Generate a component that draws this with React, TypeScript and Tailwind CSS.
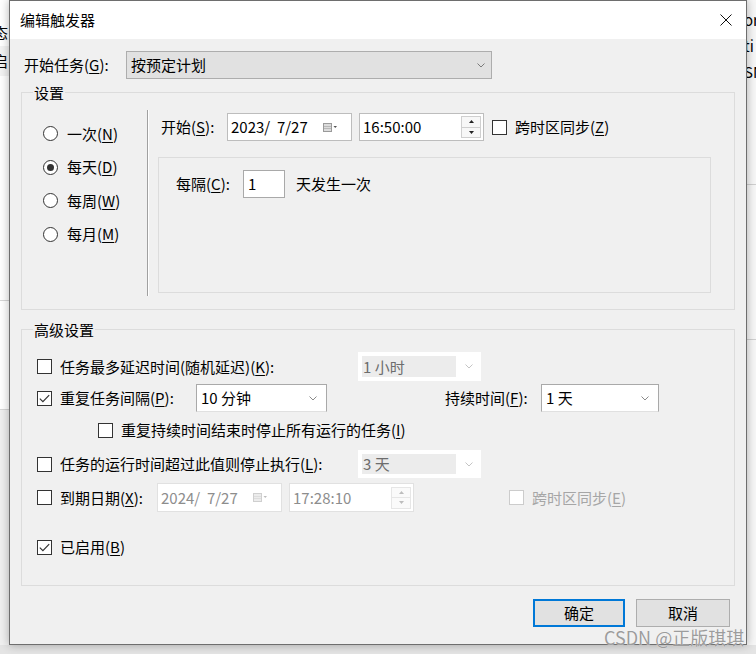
import React from "react";

const Mn = ({ k }: { k: string }) => (
  <>
    (<span className="underline decoration-1 underline-offset-[2px]">{k}</span>)
  </>
);

const Chevron = ({ color = "#606060" }: { color?: string }) => (
  <svg width="8" height="5" viewBox="0 0 8 5">
    <path d="M0.5 0.5L4 4L7.5 0.5" stroke={color} fill="none" strokeWidth="1" />
  </svg>
);

const CheckBox = ({ checked = false, disabled = false }: { checked?: boolean; disabled?: boolean }) => (
  <span
    className={`flex h-[15px] w-[15px] shrink-0 items-center justify-center border bg-white ${
      disabled ? "border-[#cccccc]" : "border-[#333333]"
    }`}
  >
    {checked && (
      <svg width="11" height="9" viewBox="0 0 11 9">
        <path d="M0.8 4.6L3.9 7.6L10.2 1.2" fill="none" stroke="#333333" strokeWidth="1.2" />
      </svg>
    )}
  </span>
);

const Radio = ({ checked = false }: { checked?: boolean }) => (
  <span className="flex h-[15px] w-[15px] shrink-0 items-center justify-center rounded-full border border-[#333333] bg-white">
    {checked && <span className="h-[7px] w-[7px] rounded-full bg-[#333333]" />}
  </span>
);

const CalIcon = ({ disabled = false }: { disabled?: boolean }) => (
  <svg width="15" height="9" viewBox="0 0 15 9">
    <rect x="0.5" y="0.5" width="8" height="8" fill={disabled ? "#ececec" : "#dcdcdc"} stroke={disabled ? "#cfcfcf" : "#9a9a9a"} />
    <path d="M1 3.5H8M1 5.5H8" stroke={disabled ? "#dddddd" : "#b8b8b8"} />
    <path d="M10.5 3L14 3L12.25 5Z" fill={disabled ? "#bdbdbd" : "#555555"} />
  </svg>
);

const DateBox = ({ value, disabled = false }: { value: string; disabled?: boolean }) => (
  <div
    className={`flex h-full w-[125px] items-center border bg-white pl-[3px] pr-[13px] whitespace-pre ${
      disabled ? "border-[#e1e1e1] text-[#8d8d8d]" : "border-[#bdbdbd]"
    }`}
  >
    <span className="flex-1">{value}</span>
    <CalIcon disabled={disabled} />
  </div>
);

const Spin = ({ disabled = false }: { disabled?: boolean }) => {
  const b = disabled ? "border-[#e6e6e6] bg-[#fafafa]" : "border-[#cfcfcf] bg-[#f7f7f7]";
  const f = disabled ? "#bdbdbd" : "#222222";
  return (
    <div className="flex h-[22px] w-[20px] flex-col">
      <span className={`flex flex-1 items-center justify-center border ${b}`}>
        <svg width="5" height="3" viewBox="0 0 5 3">
          <path d="M0 3L2.5 0L5 3Z" fill={f} />
        </svg>
      </span>
      <span className={`flex flex-1 items-center justify-center border border-t-0 ${b}`}>
        <svg width="5" height="3" viewBox="0 0 5 3">
          <path d="M0 0L2.5 3L5 0Z" fill={f} />
        </svg>
      </span>
    </div>
  );
};

const TimeBox = ({ value, disabled = false }: { value: string; disabled?: boolean }) => (
  <div
    className={`ml-[7px] flex h-full w-[125px] items-center border bg-white pl-[3px] pr-[2px] ${
      disabled ? "border-[#e1e1e1] text-[#8d8d8d]" : "border-[#bdbdbd]"
    }`}
  >
    <span className="flex-1">{value}</span>
    <Spin disabled={disabled} />
  </div>
);

const Combo = ({ value, w }: { value: string; w: string }) => (
  <div className={`flex h-[28px] ${w} items-center justify-between border border-[#a9a9a9] border-b-[#e0e0e0] bg-white pl-[4px] pr-[9px]`}>
    <span>{value}</span>
    <Chevron color="#8a8a8a" />
  </div>
);

const DisabledCombo = ({ value }: { value: string }) => (
  <div className="flex h-full w-[123px] bg-white py-[4px] pl-[4px]">
    <div className="flex flex-1 items-center bg-[#ececec] pl-[1px] text-[#6d6d6d]">{value}</div>
    <div className="flex w-[25px] items-center justify-center">
      <Chevron color="#c4c4c4" />
    </div>
  </div>
);

export default function App() {
  return (
    <div className="relative flex h-[654px] w-[756px] flex-col overflow-hidden bg-[#ebebeb] font-['Noto_Sans_CJK_SC',sans-serif] text-[15px] leading-[20px] text-black">
      <div className="flex h-[645px]">
        {/* window behind, left edge */}
        <div className="flex w-[9px] flex-col overflow-hidden whitespace-nowrap">
          <div className="h-[46px] bg-white pt-[23px]">
            <span className="-ml-[7px] block">态</span>
          </div>
          <div className="h-[30px] bg-[#f3f3f3] pt-[5px]">
            <span className="-ml-[7px] block">启</span>
          </div>
          <div className="h-[224px] bg-white" />
          <div className="h-[1px] bg-[#d6d6d6]" />
          <div className="h-[108px] bg-white" />
          <div className="h-[1px] bg-[#d6d6d6]" />
          <div className="flex-1 bg-[#f0f0f0]" />
        </div>

        <div className="relative z-10 flex h-[645px] w-[738px] flex-col border border-[#6e6e6e] bg-[#f0f0f0] shadow-[0_0_9px_rgba(0,0,0,0.3)]">
          <div className="flex h-[38px] items-center justify-between bg-white pl-[10px] pr-[14px]">
            <span>编辑触发器</span>
            <svg width="12" height="12" viewBox="0 0 12 12">
              <path d="M0.5 0.5L11.5 11.5M11.5 0.5L0.5 11.5" stroke="#111111" strokeWidth="1" />
            </svg>
          </div>

          <div className="flex flex-1 flex-col">
            <div className="ml-[14px] mt-[12px] flex h-[28px] items-center">
              <span className="w-[102px]">
                开始任务<Mn k="G" />:
              </span>
              <div className="flex h-[28px] w-[366px] items-center justify-between border border-[#adadad] bg-[#e1e1e1] pl-[4px] pr-[6px]">
                <span>按预定计划</span>
                <Chevron color="#7a7a7a" />
              </div>
            </div>

            {/* 设置 */}
            <div className="relative ml-[11px] mt-[13px] h-[218px] w-[714px] border border-[#dcdcdc]">
              <span className="absolute left-[11px] top-[-10px] bg-[#f0f0f0] px-[1px]">设置</span>
              <div className="flex pt-[17px]">
                <div className="flex w-[125px] flex-col pl-[21px] pt-[7px]">
                  {[
                    { t: "一次", k: "N", c: false },
                    { t: "每天", k: "D", c: true },
                    { t: "每周", k: "W", c: false },
                    { t: "每月", k: "M", c: false },
                  ].map((r) => (
                    <div key={r.k} className="flex h-[33.5px] items-center gap-[9px]">
                      <Radio checked={r.c} />
                      <span>
                        {r.t}
                        <Mn k={r.k} />
                      </span>
                    </div>
                  ))}
                </div>
                <div className="h-[186px] w-[2px] border-l border-[#a0a0a0] bg-white" />
                <div className="flex flex-1 flex-col pt-[3px]">
                  <div className="flex h-[28px] items-center pl-[12px]">
                    <span className="w-[66px]">
                      开始<Mn k="S" />:
                    </span>
                    <DateBox value="2023/  7/27" />
                    <TimeBox value="16:50:00" />
                    <span className="ml-[8px]">
                      <CheckBox />
                    </span>
                    <span className="ml-[8px]">
                      跨时区同步<Mn k="Z" />
                    </span>
                  </div>
                  <div className="ml-[9px] mt-[16px] h-[136px] w-[553px] border border-[#dcdcdc]">
                    <div className="ml-[17px] mt-[12px] flex h-[28px] items-center">
                      <span className="w-[67px]">
                        每隔<Mn k="C" />:
                      </span>
                      <div className="flex h-[28px] w-[42px] items-center border border-[#a9a9a9] bg-white pl-[4px]">1</div>
                      <span className="ml-[11px]">天发生一次</span>
                    </div>
                  </div>
                </div>
              </div>
            </div>

            {/* 高级设置 */}
            <div className="relative ml-[11px] mt-[19px] h-[257px] w-[714px] border border-[#dcdcdc]">
              <span className="absolute left-[11px] top-[-10px] bg-[#f0f0f0] px-[1px]">高级设置</span>
              <div className="flex flex-col pl-[15px] pt-[22px]">
                <div className="flex h-[29px] items-center">
                  <div className="flex w-[321px] items-center gap-[8px]">
                    <CheckBox />
                    <span>
                      任务最多延迟时间(随机延迟)<Mn k="K" />:
                    </span>
                  </div>
                  <DisabledCombo value="1 小时" />
                </div>

                <div className="mt-[3px] flex h-[28px] items-center">
                  <div className="flex w-[159px] items-center gap-[8px]">
                    <CheckBox checked />
                    <span>
                      重复任务间隔<Mn k="P" />:
                    </span>
                  </div>
                  <Combo value="10 分钟" w="w-[131px]" />
                  <span className="ml-[118px] w-[96px]">
                    持续时间<Mn k="F" />:
                  </span>
                  <Combo value="1 天" w="w-[118px]" />
                </div>

                <div className="ml-[61px] mt-[8px] flex h-[20px] items-center gap-[8px]">
                  <CheckBox />
                  <span>
                    重复持续时间结束时停止所有运行的任务<Mn k="I" />
                  </span>
                </div>

                <div className="mt-[10px] flex h-[28px] items-center">
                  <div className="flex w-[321px] items-center gap-[8px]">
                    <CheckBox />
                    <span>
                      任务的运行时间超过此值则停止执行<Mn k="L" />:
                    </span>
                  </div>
                  <DisabledCombo value="3 天" />
                </div>

                <div className="mt-[5px] flex h-[29px] items-center">
                  <div className="flex w-[120px] items-center gap-[8px]">
                    <CheckBox />
                    <span>
                      到期日期<Mn k="X" />:
                    </span>
                  </div>
                  <DateBox value="2024/  7/27" disabled />
                  <TimeBox value="17:28:10" disabled />
                  <span className="ml-[95px]">
                    <CheckBox disabled />
                  </span>
                  <span className="ml-[8px] text-[#a6a6a6]">
                    跨时区同步<Mn k="E" />
                  </span>
                </div>

                <div className="mt-[25px] flex h-[20px] items-center gap-[8px]">
                  <CheckBox checked />
                  <span>
                    已启用<Mn k="B" />
                  </span>
                </div>
              </div>
            </div>

            <div className="mt-[13px] flex justify-end gap-[11px] pr-[16px]">
              <button className="flex h-[28px] w-[92px] items-center justify-center border-2 border-[#0078d7] bg-[#e1e1e1]">
                确定
              </button>
              <button className="flex h-[28px] w-[94px] items-center justify-center border border-[#adadad] bg-[#e1e1e1]">
                取消
              </button>
            </div>
          </div>
        </div>

        {/* window behind, right edge */}
        <div className="flex w-[9px] flex-col overflow-hidden whitespace-nowrap bg-[#f7f7f7] pt-[10px]">
          <span className="-ml-[3px] block h-[26px]">or</span>
          <span className="-ml-[3px] block h-[26px]">ti</span>
          <span className="-ml-[3px] block h-[26px]">SN</span>
          <div className="mt-[96px] h-[1px] bg-[#d0d0d0]" />
          <div className="mt-[154px] h-[1px] bg-[#d0d0d0]" />
        </div>
      </div>
      <div className="h-[9px] bg-[#e4e4e4]" />

      <span className="absolute left-[604px] top-[626px] z-20 text-[18px] leading-[22px] text-[#9c9c9c] [text-shadow:0_0_1px_#ffffff]">
        CSDN @正版琪琪
      </span>
    </div>
  );
}
